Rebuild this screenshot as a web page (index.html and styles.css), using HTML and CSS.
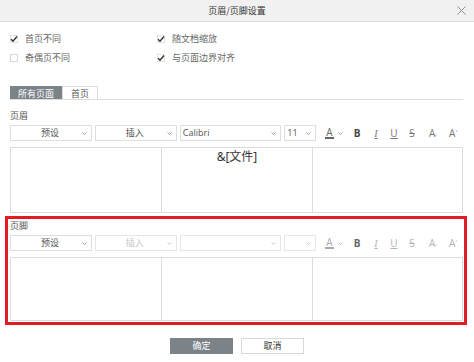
FILE: index.html
```html
<!DOCTYPE html>
<html lang="zh">
<head>
<meta charset="utf-8">
<link rel="stylesheet" href="styles.css">
</head>
<body>
<div class="dialog">
  <div class="titlebar">
    <span></span>
    <span class="title">页眉/页脚设置</span>
    <svg class="close" width="9" height="9" viewBox="0 0 9 9"><path d="M0.5 0.5 L8.5 8.5 M8.5 0.5 L0.5 8.5" stroke="#8a8a8a" stroke-width="1" fill="none"/></svg>
  </div>

  <div class="content">
    <div class="options">
      <label class="opt"><span class="cb checked"><svg width="8" height="8" viewBox="0 0 8 8"><path d="M1 4.2 L3 6.2 L7 1.5" stroke="#333" stroke-width="1.4" fill="none"/></svg></span>首页不同</label>
      <label class="opt"><span class="cb checked"><svg width="8" height="8" viewBox="0 0 8 8"><path d="M1 4.2 L3 6.2 L7 1.5" stroke="#333" stroke-width="1.4" fill="none"/></svg></span>随文档缩放</label>
      <label class="opt"><span class="cb"></span>奇偶页不同</label>
      <label class="opt"><span class="cb checked"><svg width="8" height="8" viewBox="0 0 8 8"><path d="M1 4.2 L3 6.2 L7 1.5" stroke="#333" stroke-width="1.4" fill="none"/></svg></span>与页面边界对齐</label>
    </div>

    <div class="tabs">
      <span class="tab active">所有页面</span>
      <span class="tab">首页</span>
    </div>

    <div class="section header-sec">
      <div class="sec-label">页眉</div>
      <div class="toolbar">
        <div class="sel s1"><span class="val center">预设</span><svg class="chev" width="5" height="3" viewBox="0 0 5 3"><path d="M0.5 0.5 L2.5 2.5 L4.5 0.5" stroke="#999" fill="none"/></svg></div>
        <div class="sel s2"><span class="val center">插入</span><svg class="chev" width="5" height="3" viewBox="0 0 5 3"><path d="M0.5 0.5 L2.5 2.5 L4.5 0.5" stroke="#999" fill="none"/></svg></div>
        <div class="sel s3"><span class="val latin">Calibri</span><svg class="chev" width="5" height="3" viewBox="0 0 5 3"><path d="M0.5 0.5 L2.5 2.5 L4.5 0.5" stroke="#999" fill="none"/></svg></div>
        <div class="sel s4"><span class="val latin">11</span><svg class="chev" width="5" height="3" viewBox="0 0 5 3"><path d="M0.5 0.5 L2.5 2.5 L4.5 0.5" stroke="#999" fill="none"/></svg></div>
        <div class="icons">
          <span class="ic ic-a"><span class="a-under">A</span></span>
          <span class="ic ic-chev"><svg width="5" height="3" viewBox="0 0 5 3"><path d="M0.5 0.5 L2.5 2.5 L4.5 0.5" stroke="#999" fill="none"/></svg></span>
          <span class="ic ic-b">B</span>
          <span class="ic ic-i">I</span>
          <span class="ic ic-u">U</span>
          <span class="ic ic-s">S</span>
          <span class="ic ic-sub">A<sub>,</sub></span>
          <span class="ic ic-sup">A<sup>'</sup></span>
        </div>
      </div>
      <div class="edit tall">
        <div class="col"></div>
        <div class="col"><span class="field">&amp;[文件]</span></div>
        <div class="col"></div>
      </div>
    </div>

    <div class="section footer-sec">
      <div class="sec-label">页脚</div>
      <div class="toolbar">
        <div class="sel s1"><span class="val center">预设</span><svg class="chev" width="5" height="3" viewBox="0 0 5 3"><path d="M0.5 0.5 L2.5 2.5 L4.5 0.5" stroke="#999" fill="none"/></svg></div>
        <div class="sel s2 disabled"><span class="val center">插入</span><svg class="chev" width="5" height="3" viewBox="0 0 5 3"><path d="M0.5 0.5 L2.5 2.5 L4.5 0.5" stroke="#ccc" fill="none"/></svg></div>
        <div class="sel s3 disabled"><span class="val latin"></span><svg class="chev" width="5" height="3" viewBox="0 0 5 3"><path d="M0.5 0.5 L2.5 2.5 L4.5 0.5" stroke="#ccc" fill="none"/></svg></div>
        <div class="sel s4 disabled"><span class="val latin"></span><svg class="chev" width="5" height="3" viewBox="0 0 5 3"><path d="M0.5 0.5 L2.5 2.5 L4.5 0.5" stroke="#ccc" fill="none"/></svg></div>
        <div class="icons dim">
          <span class="ic ic-a"><span class="a-under">A</span></span>
          <span class="ic ic-chev"><svg width="5" height="3" viewBox="0 0 5 3"><path d="M0.5 0.5 L2.5 2.5 L4.5 0.5" stroke="#bbb" fill="none"/></svg></span>
          <span class="ic ic-b">B</span>
          <span class="ic ic-i">I</span>
          <span class="ic ic-u">U</span>
          <span class="ic ic-s">S</span>
          <span class="ic ic-sub">A<sub>,</sub></span>
          <span class="ic ic-sup">A<sup>'</sup></span>
        </div>
      </div>
      <div class="edit short">
        <div class="col"></div>
        <div class="col"></div>
        <div class="col"></div>
      </div>
    </div>

    <div class="buttons">
      <span class="btn primary">确定</span>
      <span class="btn">取消</span>
    </div>
  </div>
</div>
</body>
</html>
```

FILE: styles.css
```css
* { box-sizing: border-box; }
html, body {
  margin: 0;
  padding: 0;
  background: #ffffff;
}
body {
  width: 474px;
  height: 362px;
  overflow: hidden;
  font-family: "Noto Sans CJK SC", "Noto Sans", sans-serif;
  font-size: 9px;
  color: #555;
}
.dialog {
  width: 474px;
  height: 362px;
  background: #fff;
}
.titlebar {
  height: 22px;
  background: #f1f1f1;
  border-bottom: 1px solid #dadada;
  display: grid;
  grid-template-columns: 1fr auto 1fr;
  align-items: center;
}
.title {
  color: #333;
  font-size: 9px;
  line-height: 12px;
}
.close {
  justify-self: end;
  margin-right: 8px;
}
.content {
  padding: 0 11px 0 10px;
}
.options {
  display: grid;
  grid-template-columns: 147px auto;
  grid-auto-rows: 19px;
  padding-top: 7px;
}
.opt {
  display: flex;
  align-items: center;
  color: #666;
  line-height: 12px;
}
.cb {
  width: 8px;
  height: 8px;
  border: 1px solid #d6d6d6;
  margin-right: 7px;
  display: flex;
  align-items: center;
  justify-content: center;
}
.cb.checked { border-color: #e2e2e2; }
.cb svg { flex: none; }

.tabs {
  margin-top: 19px;
  display: flex;
  border-bottom: 1px solid #dcdcdc;
  height: 14px;
}
.tab {
  height: 13px;
  line-height: 13px;
  padding: 0 8px;
  border: 1px solid #dcdcdc;
  border-bottom: none;
  color: #555;
}
.tab.active {
  background: #7b8389;
  border-color: #7b8389;
  color: #fff;
  padding: 0 7px;
}

.sec-label {
  line-height: 12px;
  color: #555;
}
.header-sec { margin-top: 10px; }
.toolbar {
  margin-top: 3px;
  height: 16px;
  display: flex;
  gap: 3px;
}
.sel {
  height: 16px;
  border: 1px solid #dedede;
  display: flex;
  align-items: center;
  position: relative;
  padding-right: 14px;
}
.sel .chev {
  position: absolute;
  right: 4px;
  top: 6px;
}
.s1, .s2 { width: 83px; }
.s3 { width: 103px; }
.s4 { width: 32px; }
.val {
  line-height: 12px;
  color: #555;
}
.val.center {
  flex: 1;
  text-align: center;
  padding-left: 12px;
}
.val.latin {
  font-family: "Open Sans", "Noto Sans", sans-serif;
  padding-left: 2px;
  color: #555;
}
.sel.disabled .val { color: #c8c8c8; }
.sel.disabled { border-color: #e6e6e6; }

.icons {
  display: flex;
  align-items: center;
  margin-left: 5px;
  font-family: "Open Sans", "Noto Sans", sans-serif;
  font-size: 10px;
  color: #777;
}
.ic {
  display: flex;
  align-items: center;
  justify-content: center;
  height: 16px;
}
.ic-a { width: 11px; }
.a-under {
  display: inline-block;
  line-height: 10px;
  border-bottom: 2px solid #666;
  padding: 0 1px;
  color: #666;
}
.ic-chev { width: 10px; }
.ic-b { width: 16px; font-weight: bold; color: #444; margin-left: 4px; }
.ic-i { width: 18px; font-family: "Liberation Serif", serif; font-style: italic; text-decoration: underline; text-underline-offset: 1px; margin-left: 2px; }
.ic-u { width: 18px; text-decoration: underline; text-underline-offset: 1px; }
.ic-s { width: 18px; text-decoration: line-through; }
.ic-sub { width: 20px; margin-left: 2px; }
.ic-sup { width: 20px; }
.ic sub, .ic sup { font-size: 7px; line-height: 0; }

.icons.dim { color: #b5b5b5; }
.icons.dim .a-under { color: #aaa; border-bottom-color: #aaa; }
.icons.dim .ic-b { color: #666; }

.edit {
  margin-top: 6px;
  border: 1px solid #dcdcdc;
  display: grid;
  grid-template-columns: 1fr 1fr 1fr;
}
.edit.tall { height: 66px; }
.edit.short { height: 64px; }
.col + .col { border-left: 1px solid #dcdcdc; }
.col {
  text-align: center;
}
.field {
  display: inline-block;
  font-size: 12px;
  line-height: 14px;
  margin-top: 2px;
  color: #333;
  font-family: "Noto Sans", "Noto Sans CJK SC", sans-serif;
}

.footer-sec {
  margin: 3px -4px 0 -5px;
  border: 3px solid #e11b22;
  padding: 1px 1px 1px 2px;
}

.buttons {
  margin-top: 13px;
  display: flex;
  justify-content: center;
  gap: 8px;
  padding-left: 1px;
}
.btn {
  width: 63px;
  height: 16px;
  line-height: 14px;
  text-align: center;
  border: 1px solid #d8d8d8;
  color: #333;
  background: #fff;
}
.btn.primary {
  background: #7b8389;
  border-color: #7b8389;
  color: #fff;
}
```
